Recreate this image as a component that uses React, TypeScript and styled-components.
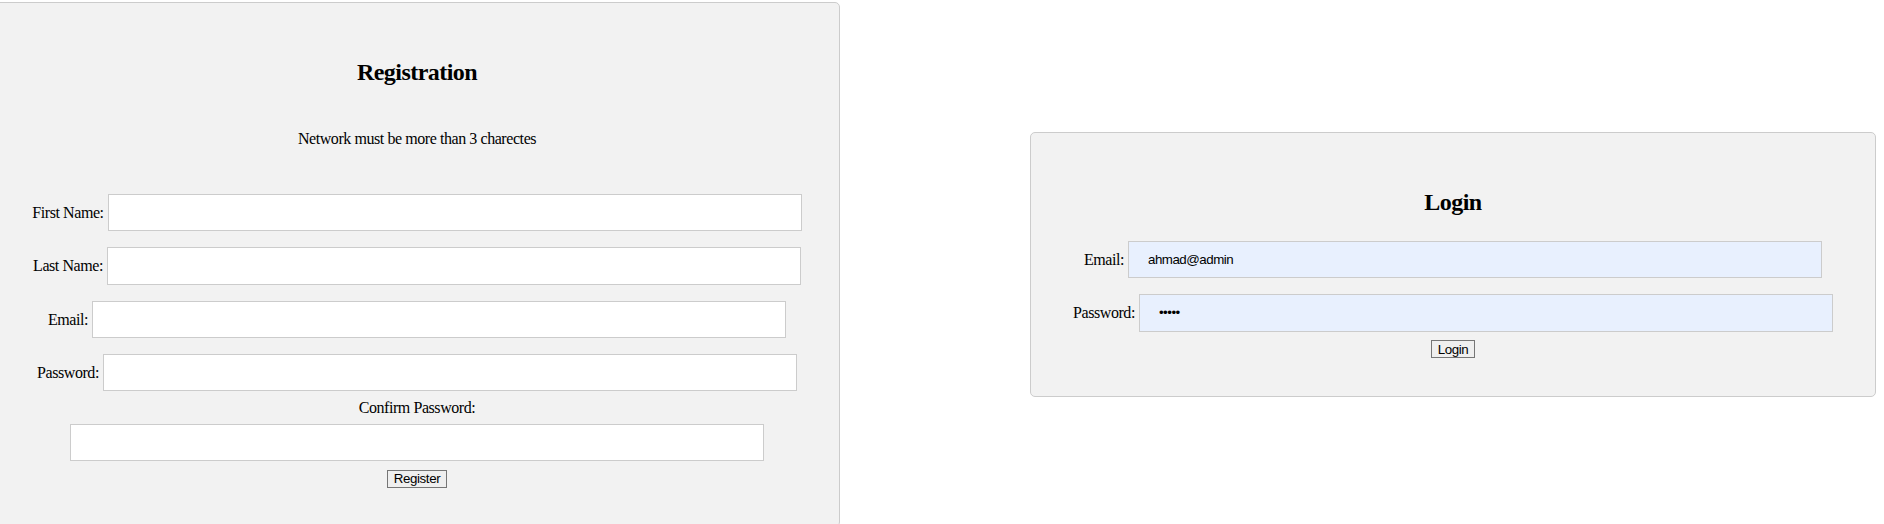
import React from 'react';
import styled, { createGlobalStyle } from 'styled-components';

const GlobalStyle = createGlobalStyle`
  html, body {
    margin: 0;
    padding: 0;
    overflow: hidden;
    background: #fff;
    font-family: "Liberation Serif", "Times New Roman", serif;
    font-size: 16px;
    letter-spacing: -0.43px;
    color: #000;
  }
`;

const Page = styled.div`
  height: 528.5px;
  display: flex;
  justify-content: space-between;
  align-items: center;
  padding-right: 8px;
  box-sizing: border-box;
`;

interface PanelProps {
  offsetLeft?: boolean;
}

const Panel = styled.form`
  width: 846px;
  box-sizing: border-box;
  margin-left: ${(p: PanelProps) => (p.offsetLeft ? '-6px' : '0')};
  padding: 0 20px 37.67px;
  background: #f2f2f2;
  border: 1px solid #ccc;
  border-radius: 5px;
  display: flex;
  flex-direction: column;
  align-items: center;
  flex-shrink: 0;
`;

interface TitleProps {
  gapBelow: number;
}

const Title = styled.h2`
  margin: 55px 0 ${(p: TitleProps) => p.gapBelow}px;
  font-size: 24px;
  line-height: 28px;
  font-weight: bold;
  letter-spacing: -0.55px;
`;

const Message = styled.p`
  margin: 0 0 38px;
  line-height: 18px;
`;

interface FieldProps {
  stacked?: boolean;
}

const Field = styled.div`
  display: flex;
  flex-direction: ${(p: FieldProps) => (p.stacked ? 'column' : 'row')};
  align-items: center;
  justify-content: center;
  gap: ${(p: FieldProps) => (p.stacked ? '0' : '4px')};
`;

const Label = styled.label`
  line-height: 17px;
  white-space: nowrap;
`;

interface InputProps {
  filled?: boolean;
}

const Input = styled.input`
  width: 694px;
  height: 37.33px;
  box-sizing: border-box;
  margin: 8px 0;
  padding: 10px 19px;
  border: 1px solid #ccc;
  border-radius: 0;
  outline: none;
  background: ${(p: InputProps) => (p.filled ? '#e8f0fe' : '#fff')};
  font-family: "Liberation Sans", Arial, sans-serif;
  font-size: 13.33px;
  letter-spacing: -0.5px;
  color: #000;
`;

const Button = styled.button`
  height: 18px;
  margin-top: 0.5px;
  padding: 0 6px;
  background: #efefef;
  border: 1px solid #767676;
  border-radius: 0;
  font-family: "Liberation Sans", Arial, sans-serif;
  font-size: 13.33px;
  letter-spacing: -0.4px;
  line-height: 15px;
  color: #000;
`;

const registerFields = [
  { id: 'firstName', label: 'First Name:', type: 'text' },
  { id: 'lastName', label: 'Last Name:', type: 'text' },
  { id: 'email', label: 'Email:', type: 'email' },
  { id: 'password', label: 'Password:', type: 'password' },
];

const Registration: React.FC = () => (
  <Panel offsetLeft onSubmit={(e) => e.preventDefault()}>
    <Title gapBelow={44}>Registration</Title>
    <Message>Network must be more than 3 charectes</Message>
    {registerFields.map((f) => (
      <Field key={f.id}>
        <Label htmlFor={f.id}>{f.label}</Label>
        <Input id={f.id} type={f.type} />
      </Field>
    ))}
    <Field stacked>
      <Label htmlFor="confirmPassword">Confirm Password:</Label>
      <Input id="confirmPassword" type="password" />
    </Field>
    <Button type="submit">Register</Button>
  </Panel>
);

const Login: React.FC = () => (
  <Panel onSubmit={(e) => e.preventDefault()}>
    <Title gapBelow={17}>Login</Title>
    <Field>
      <Label htmlFor="loginEmail">Email:</Label>
      <Input id="loginEmail" type="text" filled readOnly value="ahmad@admin" />
    </Field>
    <Field>
      <Label htmlFor="loginPassword">Password:</Label>
      <Input id="loginPassword" type="password" filled readOnly value="12345" />
    </Field>
    <Button type="submit">Login</Button>
  </Panel>
);

const App: React.FC = () => (
  <>
    <GlobalStyle />
    <Page>
      <Registration />
      <Login />
    </Page>
  </>
);

export default App;
